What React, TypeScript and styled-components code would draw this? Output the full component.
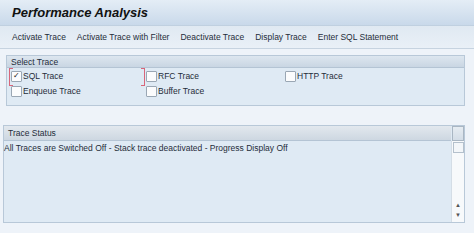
import styled, { createGlobalStyle } from 'styled-components';

const GlobalStyle = createGlobalStyle`
  html, body {
    margin: 0;
    padding: 0;
    background: #eef3f9;
  }
  body {
    font-family: "Liberation Sans", Arial, sans-serif;
    color: #1c2a38;
  }
`;

const Page = styled.div`
  width: 474px;
  height: 233px;
  display: flex;
  flex-direction: column;
  background: #eef3f9;
  overflow: hidden;
`;

const TitleBar = styled.div`
  height: 25px;
  flex: none;
  display: flex;
  align-items: center;
  padding-left: 12px;
  background: linear-gradient(#e4edf6, #c9d9ea);
  border-bottom: 1px solid #c0d0e0;
`;

const Title = styled.h1`
  margin: 0;
  font-size: 13px;
  font-weight: bold;
  font-style: italic;
  color: #111;
`;

const Toolbar = styled.div`
  height: 22px;
  flex: none;
  display: flex;
  align-items: center;
  gap: 11px;
  padding-left: 12px;
  background: linear-gradient(#e0e9f2, #e9f0f7);
  border-bottom: 1px solid #c6d3e0;
`;

const ToolButton = styled.span`
  font-size: 8.5px;
  color: #1f2d3a;
  white-space: nowrap;
`;

const Body = styled.div`
  flex: 1;
  display: flex;
  flex-direction: column;
  padding: 6px 9px 10px 6px;
  gap: 19px;
`;

const Group = styled.div<{ grow?: boolean }>`
  display: flex;
  flex-direction: column;
  border: 1px solid #b8c8d8;
  background: #dfeaf4;
  ${p => (p.grow ? 'flex: 1;' : '')}
`;

const GroupHeader = styled.div`
  height: 11px;
  display: flex;
  align-items: center;
  padding-left: 4px;
  font-size: 8.5px;
  color: #1f2d3a;
  background: linear-gradient(#dde6ef, #c9d6e3);
  border-bottom: 1px solid #b4c4d4;
`;

const OptionGrid = styled.div`
  display: grid;
  grid-template-columns: 135px 139px 1fr;
  row-gap: 3px;
  padding: 2px 0 8px 4px;
`;

const Option = styled.label`
  display: flex;
  align-items: center;
  font-size: 8.5px;
  color: #1f2d3a;
  height: 12px;
`;

const Box = styled.span<{ focus?: 'left' | 'right' }>`
  position: relative;
  width: 9px;
  height: 9px;
  margin-right: 1px;
  border: 1px solid #9aa7b4;
  border-radius: 1px;
  background: #fbfcfd;
  display: flex;
  align-items: center;
  justify-content: center;
  font-size: 8px;
  line-height: 1;
  color: #222;
  ${p =>
    p.focus === 'left'
      ? `
    &::before {
      content: '';
      position: absolute;
      left: -3px;
      top: -4px;
      width: 3px;
      height: 16px;
      border: 1px solid #d8667a;
      border-right: none;
    }
  `
      : ''}
  ${p =>
    p.focus === 'right'
      ? `
    &::before {
      content: '';
      position: absolute;
      left: -6px;
      top: -4px;
      width: 3px;
      height: 16px;
      border: 1px solid #d8667a;
      border-left: none;
    }
  `
      : ''}
`;

const StatusRow = styled.div`
  display: flex;
  flex: 1;
`;

const StatusText = styled.div`
  flex: 1;
  font-size: 8.5px;
  padding: 2px 0 0 0;
  color: #1f2d3a;
  white-space: nowrap;
`;

const StatusHead = styled.div`
  display: flex;
  height: 15px;
`;

const HeaderFill = styled(GroupHeader)`
  flex: 1;
  height: auto;
  background: linear-gradient(#e2e8ee, #cdd7e1);
`;

const ScrollCorner = styled.div`
  width: 10px;
  margin-left: 1px;
  border: 1px solid #a9b6c3;
  background: linear-gradient(#e6ecf2, #d3dde7);
`;

const ScrollBar = styled.div`
  width: 12px;
  display: flex;
  flex-direction: column;
  align-items: center;
  background: #f7f9fb;
  border-left: 1px solid #d4dde6;
  padding-bottom: 2px;
`;

const ScrollThumb = styled.div`
  width: 9px;
  height: 9px;
  margin-top: 1px;
  border: 1px solid #b4c0cc;
  background: #f3f6f9;
  flex: none;
`;

const Arrow = styled.div`
  font-size: 6px;
  color: #555;
  line-height: 10px;
`;

const Spacer = styled.div`
  flex: 1;
`;

const StatusGroup = styled(Group)`
  margin-left: -3px;
`;

export default function App() {
  return (
    <Page>
      <GlobalStyle />
      <TitleBar>
        <Title>Performance Analysis</Title>
      </TitleBar>
      <Toolbar>
        <ToolButton>Activate Trace</ToolButton>
        <ToolButton>Activate Trace with Filter</ToolButton>
        <ToolButton>Deactivate Trace</ToolButton>
        <ToolButton>Display Trace</ToolButton>
        <ToolButton>Enter SQL Statement</ToolButton>
      </Toolbar>
      <Body>
        <Group>
          <GroupHeader>Select Trace</GroupHeader>
          <OptionGrid>
            <Option>
              <Box focus="left">✓</Box>SQL Trace
            </Option>
            <Option>
              <Box focus="right" />RFC Trace
            </Option>
            <Option>
              <Box />HTTP Trace
            </Option>
            <Option>
              <Box />Enqueue Trace
            </Option>
            <Option>
              <Box />Buffer Trace
            </Option>
          </OptionGrid>
        </Group>
        <StatusGroup grow>
          <StatusHead>
            <HeaderFill>Trace Status</HeaderFill>
            <ScrollCorner />
          </StatusHead>
          <StatusRow>
            <StatusText>All Traces are Switched Off - Stack trace deactivated - Progress Display Off</StatusText>
            <ScrollBar>
              <ScrollThumb />
              <Spacer />
              <Arrow>▲</Arrow>
              <Arrow>▼</Arrow>
            </ScrollBar>
          </StatusRow>
        </StatusGroup>
      </Body>
    </Page>
  );
}
